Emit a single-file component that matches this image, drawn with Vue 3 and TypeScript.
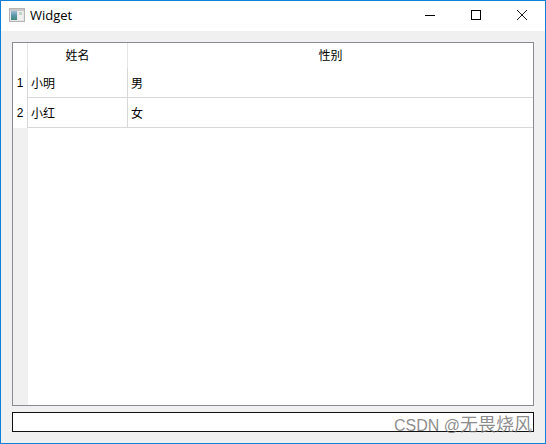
<script setup lang="ts">
const rows: { id: number; name: string; gender: string }[] = [
  { id: 1, name: '小明', gender: '男' },
  { id: 2, name: '小红', gender: '女' },
]
</script>

<template>
  <div class="window">
    <header class="titlebar">
      <svg class="app-icon" width="16" height="14" viewBox="0 0 16 14">
        <defs>
          <linearGradient id="pane" x1="0" y1="0" x2="0" y2="1">
            <stop offset="0" stop-color="#9cc0d8" />
            <stop offset="0.5" stop-color="#5a96a8" />
            <stop offset="1" stop-color="#3f8a78" />
          </linearGradient>
        </defs>
        <rect x="0.5" y="0.5" width="15" height="13" fill="#e6e6e6" stroke="#b4b4b4" />
        <rect x="1" y="1" width="14" height="2" fill="#c8c8c8" />
        <rect x="2" y="3" width="6" height="9" fill="url(#pane)" />
        <rect x="9" y="3" width="5" height="9" fill="#efefef" />
        <rect x="10" y="4" width="3" height="3" fill="#c0d4c6" />
      </svg>
      <span class="title">Widget</span>
      <div class="controls">
        <div class="ctl">
          <svg width="12" height="12" viewBox="0 0 12 12"><path d="M1 6.5H11" stroke="#000" fill="none" /></svg>
        </div>
        <div class="ctl">
          <svg width="12" height="12" viewBox="0 0 12 12"><rect x="1.5" y="1.5" width="9" height="9" stroke="#000" fill="none" /></svg>
        </div>
        <div class="ctl">
          <svg width="12" height="12" viewBox="0 0 12 12"><path d="M1 1L11 11M11 1L1 11" stroke="#000" fill="none" stroke-width="0.9" /></svg>
        </div>
      </div>
    </header>
    <main class="content">
      <div class="table">
        <div class="head">
          <div class="corner"></div>
          <div class="hcell name">姓名</div>
          <div class="hcell gender">性别</div>
        </div>
        <div v-for="r in rows" :key="r.id" class="row">
          <div class="rowhead">{{ r.id }}</div>
          <div class="cell name">{{ r.name }}</div>
          <div class="cell gender">{{ r.gender }}</div>
        </div>
        <div class="rest"><div class="rest-head"></div></div>
      </div>
      <div class="input"></div>
    </main>
    <div class="watermark">CSDN @<span class="wm-cjk">无畏烧风</span></div>
  </div>
</template>

<style scoped>
.window {
  position: relative;
  width: 546px;
  height: 444px;
  box-sizing: border-box;
  border: 1px solid #0f7fd8;
  display: flex;
  flex-direction: column;
  background: #f0f0f0;
  font-family: "Liberation Sans", "Noto Sans CJK SC", sans-serif;
  font-size: 12px;
  color: #000;
  overflow: hidden;
}
.titlebar {
  height: 30px;
  background: #fff;
  display: flex;
  align-items: center;
  flex: none;
}
.app-icon {
  margin-left: 8px;
  margin-top: -2px;
}
.title {
  margin-left: 5px;
  margin-top: -3px;
  font-family: "Open Sans", "Liberation Sans", sans-serif;
  font-size: 13px;
}
.controls {
  margin-left: auto;
  display: flex;
}
.ctl {
  width: 46px;
  height: 30px;
  display: flex;
  align-items: center;
  justify-content: center;
  margin-top: -2px;
}
.content {
  flex: 1;
  display: flex;
  flex-direction: column;
  padding: 11px 11px 11px;
  gap: 6px;
  min-height: 0;
}
.table {
  flex: 1;
  box-sizing: border-box;
  border: 1px solid #8a8a92;
  background: #fff;
  display: flex;
  flex-direction: column;
  min-height: 0;
}
.head {
  display: flex;
  height: 25px;
  flex: none;
}
.corner {
  width: 15px;
  box-sizing: border-box;
  border-right: 1px solid #e4e4e4;
  flex: none;
}
.hcell {
  display: flex;
  align-items: center;
  justify-content: center;
  box-sizing: border-box;
  padding-bottom: 2px;
}
.name {
  width: 100px;
  flex: none;
  box-sizing: border-box;
  border-right: 1px solid #e4e4e4;
}
.gender {
  flex: 1;
}
.row {
  display: flex;
  height: 30px;
  flex: none;
}
.rowhead {
  width: 15px;
  flex: none;
  display: flex;
  align-items: center;
  justify-content: center;
  background: #fff;
  box-sizing: border-box;
  border-right: 1px solid #d8d8d8;
}
.cell {
  display: flex;
  align-items: center;
  padding-left: 3px;
  border-bottom: 1px solid #d8d8d8;
  box-sizing: border-box;
}
.cell.name {
  border-right: 1px solid #d8d8d8;
}
.rest {
  flex: 1;
  display: flex;
}
.rest-head {
  width: 15px;
  background: #f0f0f0;
}
.input {
  height: 20px;
  flex: none;
  box-sizing: border-box;
  border: 1px solid #111;
  background: #fff;
}
.watermark {
  position: absolute;
  right: 13px;
  bottom: 7px;
  font-size: 16px;
  color: rgba(110, 110, 110, 0.8);
  white-space: nowrap;
  display: flex;
  align-items: baseline;
}
.wm-cjk {
  font-size: 18px;
}
</style>
